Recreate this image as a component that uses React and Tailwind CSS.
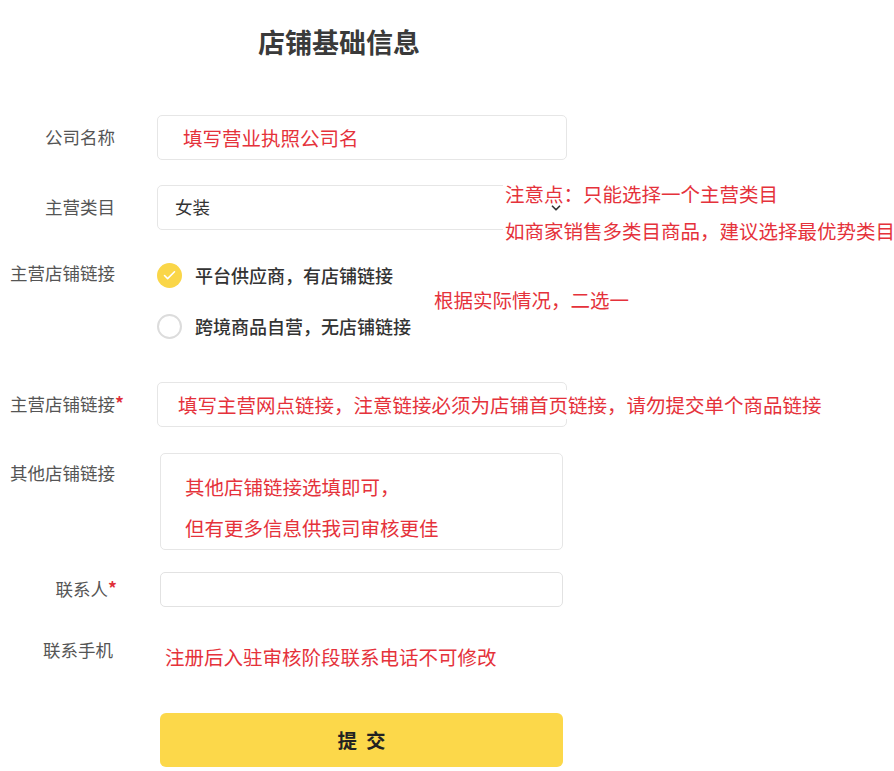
import React from 'react';
import { ChevronDown, Check } from 'lucide-react';

const font = { fontFamily: '"Noto Sans CJK SC", "Noto Sans", sans-serif' };

const Label = ({ children, required, className = '' }) => (
    <div className={`w-[115px] shrink-0 text-right text-[17.5px] text-[#555] ${className}`}>
        <span className="relative">
            {children}
            {required && <span className="absolute left-full top-[-1px] text-[#e02f3a] font-bold">*</span>}
        </span>
    </div>
);

const Radio = ({ checked, children }) => (
    <div className="flex items-center h-[40px]">
        {checked ? (
            <span className="w-[25px] h-[25px] rounded-full bg-[#fad648] flex items-center justify-center">
                <Check size={15} strokeWidth={2.5} className="text-white" />
            </span>
        ) : (
            <span className="w-[25px] h-[25px] rounded-full border-2 border-[#dcdcdc] bg-white" />
        )}
        <span className="ml-[13px] text-[18px] font-medium text-[#333]">{children}</span>
    </div>
);

const App = () => {
    return (
        <div className="w-[894px] h-[771px] bg-white overflow-hidden relative" style={font}>
            <div className="pt-[24px] pl-[258px] text-[27px] leading-[36px] font-bold text-[#3a3a3a]">
                店铺基础信息
            </div>

            <div className="flex flex-col mt-[55px]">
                {/* 公司名称 */}
                <div className="flex items-center h-[45px]">
                    <Label>公司名称</Label>
                    <div className="ml-[42px] w-[410px] h-[45px] border border-[#e6e6e6] rounded-[5px] flex items-center pl-[25px] text-[19.5px] text-[#e5323b]">
                        填写营业执照公司名
                    </div>
                </div>

                {/* 主营类目 */}
                <div className="relative flex items-center h-[45px] mt-[25px]">
                    <Label>主营类目</Label>
                    <div className="ml-[42px] w-[410px] h-[45px] border border-[#e6e6e6] rounded-[5px] flex items-center pl-[17px] text-[17.5px] text-[#333]">
                        女装
                    </div>
                    <div className="absolute left-[503px] top-[-10px] bg-white pl-[2px] pr-[4px] text-[19.5px] leading-[37px] text-[#e5323b] whitespace-nowrap z-10">
                        <div>注意点：只能选择一个主营类目</div>
                        <div>如商家销售多类目商品，建议选择最优势类目</div>
                    </div>
                    <ChevronDown size={14} strokeWidth={3} className="absolute left-[549px] top-[16px] text-[#333] z-20" />
                </div>

                {/* 主营店铺链接 radios */}
                <div className="relative flex items-start mt-[25px] h-[92px]">
                    <Label className="leading-[36px]">主营店铺链接</Label>
                    <div className="ml-[42px] flex flex-col gap-[11px]">
                        <Radio checked>平台供应商，有店铺链接</Radio>
                        <Radio>跨境商品自营，无店铺链接</Radio>
                    </div>
                    <div className="absolute left-[432px] top-[32px] bg-white px-[2px] text-[19.5px] leading-[26px] text-[#e5323b]">
                        根据实际情况，二选一
                    </div>
                </div>

                {/* 主营店铺链接* */}
                <div className="flex items-center h-[45px] mt-[35px]">
                    <Label required>主营店铺链接</Label>
                    <div className="ml-[42px] w-[410px] h-[45px] border border-[#e6e6e6] rounded-[5px] flex items-center pl-[20px] text-[19.5px] text-[#e5323b]">
                        <span className="relative z-10 whitespace-nowrap bg-white pr-[4px]">
                            填写主营网点链接，注意链接必须为店铺首页链接，请勿提交单个商品链接
                        </span>
                    </div>
                </div>

                {/* 其他店铺链接 */}
                <div className="flex items-start mt-[26px]">
                    <Label className="leading-[40px]">其他店铺链接</Label>
                    <div className="ml-[45px] w-[403px] h-[97px] border border-[#e6e6e6] rounded-[5px] pt-[12px] pl-[24px] text-[19.5px] leading-[41px] text-[#e5323b]">
                        <div>其他店铺链接选填即可，</div>
                        <div>但有更多信息供我司审核更佳</div>
                    </div>
                </div>

                {/* 联系人 */}
                <div className="flex items-center h-[35px] mt-[22px]">
                    <Label required className="pr-[7px]">联系人</Label>
                    <div className="ml-[45px] w-[403px] h-[35px] border border-[#e2e2e2] rounded-[5px]" />
                </div>

                {/* 联系手机 */}
                <div className="flex items-start mt-[28px] h-[45px]">
                    <Label className="pr-[2px] leading-[30px]">联系手机</Label>
                    <div className="ml-[50px] pt-[7px] text-[19.5px] leading-[30px] text-[#e5323b]">
                        注册后入驻审核阶段联系电话不可修改
                    </div>
                </div>

                {/* 提交 */}
                <div className="flex mt-[33px]">
                    <div className="w-[115px] shrink-0" />
                    <button className="ml-[45px] w-[403px] h-[54px] rounded-[6px] bg-[#fcd84a] text-[19.5px] font-bold text-[#222] flex items-center justify-center gap-[9px]">
                        <span>提</span>
                        <span>交</span>
                    </button>
                </div>
            </div>
        </div>
    );
};

export default App;
